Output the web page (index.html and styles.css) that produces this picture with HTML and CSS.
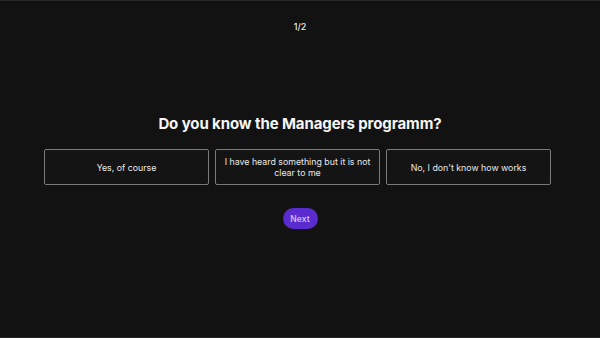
FILE: index.html
```html
<!DOCTYPE html>
<html lang="en">
<head>
  <meta charset="UTF-8">
  <title>Quiz</title>
  <link rel="stylesheet" href="styles.css">
</head>
<body>
  <div class="screen">
    <div class="counter">1/2</div>
    <div class="quiz">
      <h2>Do you know the Managers programm?</h2>
      <div class="options">
        <button class="option">Yes, of course</button>
        <button class="option">I have heard something but it is not clear to me</button>
        <button class="option">No, I don't know how works</button>
      </div>
      <button class="next">Next</button>
    </div>
  </div>
</body>
</html>
```

FILE: styles.css
```css
* {
  box-sizing: border-box;
}

body {
  margin: 0;
  background-color: #121212;
  color: #f2f2f2;
  font-family: Inter, "Noto Sans", sans-serif;
}

/* Pantalla completa con bordes finos arriba y abajo */
.screen {
  height: 338px;
  border-top: 1px solid #262626;
  border-bottom: 1px solid #262626;
  display: flex;
  flex-direction: column;
  align-items: center;
}

.counter {
  margin-top: 20px;
  font-size: 9px;
  font-weight: 500;
  color: #e6e6e6;
}

.quiz {
  margin-top: 82px;
  display: flex;
  flex-direction: column;
  align-items: center;
}

h2 {
  margin: 0;
  font-size: 15px;
  font-weight: 700;
  letter-spacing: -0.1px;
  color: #f5f5f5;
}

.options {
  margin-top: 16px;
  margin-right: 5px;
  display: flex;
  gap: 6px;
}

.option {
  width: 165px;
  height: 36px;
  padding: 0 8px;
  background-color: #141414;
  border: 1px solid #7a7a7a;
  border-radius: 2px;
  color: #e8e8e8;
  font-family: Inter, "Noto Sans", sans-serif;
  font-size: 8.8px;
  line-height: 11px;
  cursor: pointer;
}

.next {
  margin-top: 23px;
  width: 35px;
  height: 21px;
  padding: 0;
  background-color: #5a2bcf;
  border: none;
  border-radius: 11px;
  color: #cbbcf5;
  font-family: Inter, "Noto Sans", sans-serif;
  font-size: 8.5px;
  font-weight: 600;
  cursor: pointer;
}
```
